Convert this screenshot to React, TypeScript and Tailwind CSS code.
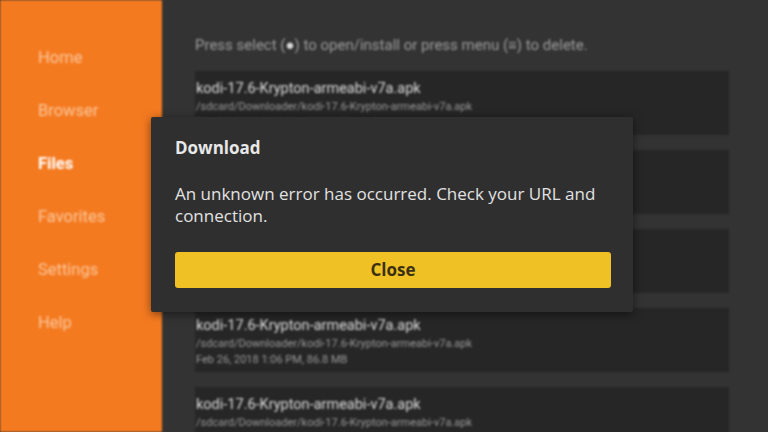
import React from 'react';

const menuItems = ['Home', 'Browser', 'Files', 'Favorites', 'Settings', 'Help'];

const files = Array.from({ length: 5 }, (_, i) => ({
  id: i,
  name: 'kodi-17.6-Krypton-armeabi-v7a.apk',
  path: '/sdcard/Downloader/kodi-17.6-Krypton-armeabi-v7a.apk',
  meta: 'Feb 26, 2018 1:06 PM, 86.8 MB',
}));

const App: React.FC = () => {
  return (
    <div className="relative w-[768px] h-[432px] overflow-hidden bg-[#333333]" style={{ fontFamily: 'Roboto, "Liberation Sans", sans-serif' }}>
      {/* blurred background screen */}
      <div className="flex h-full blur-[1px]">
        <div className="w-[162px] shrink-0 bg-[#f47a20] pt-[31px] pl-[38px] flex flex-col">
          {menuItems.map((item) => (
            <div
              key={item}
              className={`leading-[53px] text-[16.5px] ${item === 'Files' ? 'text-white font-bold' : 'text-[#fbc79b]'}`}
            >
              {item}
            </div>
          ))}
        </div>

        <div className="flex-1 pl-[33px] pt-[37px]">
          <p className="text-[15px] leading-[16px] text-[#9c9c9c] mb-[18px]">
            Press select (<span className="text-[#dadada]">●</span>) to open/install or press menu (≡) to delete.
          </p>
          <div className="flex flex-col gap-[15px] w-[534px]">
            {files.map((f) => (
              <div key={f.id} className="h-[64px] bg-[#262626] pl-[1px] pt-[10px]">
                <div className="text-[14.5px] leading-[16px] text-[#dcdcdc]">{f.name}</div>
                <div className="mt-[3px] text-[11px] leading-[14px] text-[#9a9a9a]">{f.path}</div>
                <div className="mt-[2px] text-[11px] leading-[14px] text-[#9a9a9a]">{f.meta}</div>
              </div>
            ))}
          </div>
        </div>
      </div>

      {/* dialog */}
      <div
        className="absolute left-[151px] top-[117px] w-[482px] h-[195px] bg-[#2f2f2f] rounded-[2px] shadow-[0_2px_10px_rgba(0,0,0,0.5)] pt-[20px] pl-[24px] pr-[22px]"
        style={{ fontFamily: '"Open Sans", "Noto Sans", sans-serif' }}
      >
        <h2 className="text-[17px] leading-[22px] font-bold text-[#e8e8e8]">Download</h2>
        <p className="mt-[24px] text-[17px] leading-[22px] text-[#e2e2e2]">
          An unknown error has occurred. Check your URL and connection.
        </p>
        <button className="mt-[25px] w-full h-[36px] rounded-[3px] bg-[#efc125] text-[17px] font-bold text-[#3b3112]">
          Close
        </button>
      </div>
    </div>
  );
};

export default App;
